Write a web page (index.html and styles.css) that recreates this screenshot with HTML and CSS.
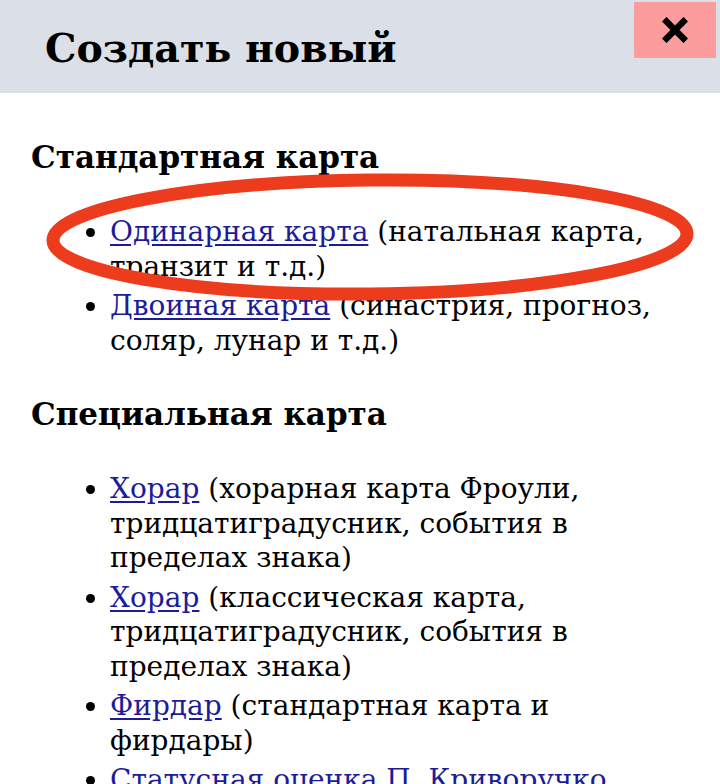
FILE: index.html
```html
<!DOCTYPE html>
<html lang="ru">
<head>
<meta charset="utf-8">
<link rel="stylesheet" href="styles.css">
</head>
<body>
<div class="header">
  <h1 class="title">Создать новый</h1>
  <button class="close" aria-label="Закрыть">
    <svg width="26" height="26" viewBox="0 0 26 26"><path d="M4.5 4.5 L21.5 21.5 M21.5 4.5 L4.5 21.5" stroke="#000" stroke-width="6.5" stroke-linecap="square"/></svg>
  </button>
</div>
<div class="content">
  <h2 class="section section-first">Стандартная карта</h2>
  <ul class="list">
    <li><a href="#">Одинарная карта</a> (натальная карта, транзит и т.д.)</li>
    <li><a href="#">Двоиная карта</a> (синастрия, прогноз, соляр, лунар и т.д.)</li>
  </ul>
  <h2 class="section">Специальная карта</h2>
  <ul class="list">
    <li><a href="#">Хорар</a> (хорарная карта Фроули, тридцатиградусник, события в пределах знака)</li>
    <li><a href="#">Хорар</a> (классическая карта, тридцатиградусник, события в пределах знака)</li>
    <li><a href="#">Фирдар</a> (стандартная карта и фирдары)</li>
    <li><a href="#">Статусная оценка П. Криворучко</a></li>
  </ul>
</div>
<svg class="circle" width="720" height="784" viewBox="0 0 720 784">
  <ellipse cx="370" cy="237" rx="317" ry="57" fill="none" stroke="#ec3b1d" stroke-width="13" transform="rotate(-0.6 370 237)"/>
</svg>
</body>
</html>
```
FILE: styles.css
```css
html, body { margin: 0; padding: 0; background: #fff; }
body {
  position: relative;
  font-family: "DejaVu Serif", serif;
  color: #000;
  width: 720px;
  height: 784px;
  overflow: hidden;
}
.header {
  background: #dbe0e8;
  height: 93px;
  display: flex;
  align-items: flex-start;
  justify-content: space-between;
}
.title {
  margin: 25px 0 0 45px;
  font-size: 39.5px;
  line-height: 46px;
  font-weight: bold;
}
.close {
  margin: 2px 4px 0 0;
  width: 82px;
  height: 56px;
  background: #fd9c9c;
  border: none;
  padding: 0;
  display: flex;
  align-items: center;
  justify-content: center;
}
.content { padding: 0 0 0 31px; }
.section {
  margin: 36px 0 0 0;
  font-size: 31px;
  line-height: 40px;
  font-weight: bold;
}
.section-first { margin-top: 44px; }
.list {
  margin: 38px 0 0 0;
  padding: 0 0 0 79px;
  font-size: 28px;
  line-height: 34.5px;
  width: 562px;
}
.list li + li { margin-top: 5px; }
a { color: #1c1c9a; text-decoration: underline; text-underline-offset: 3px; }
.circle { position: absolute; left: 0; top: 0; pointer-events: none; }
```
